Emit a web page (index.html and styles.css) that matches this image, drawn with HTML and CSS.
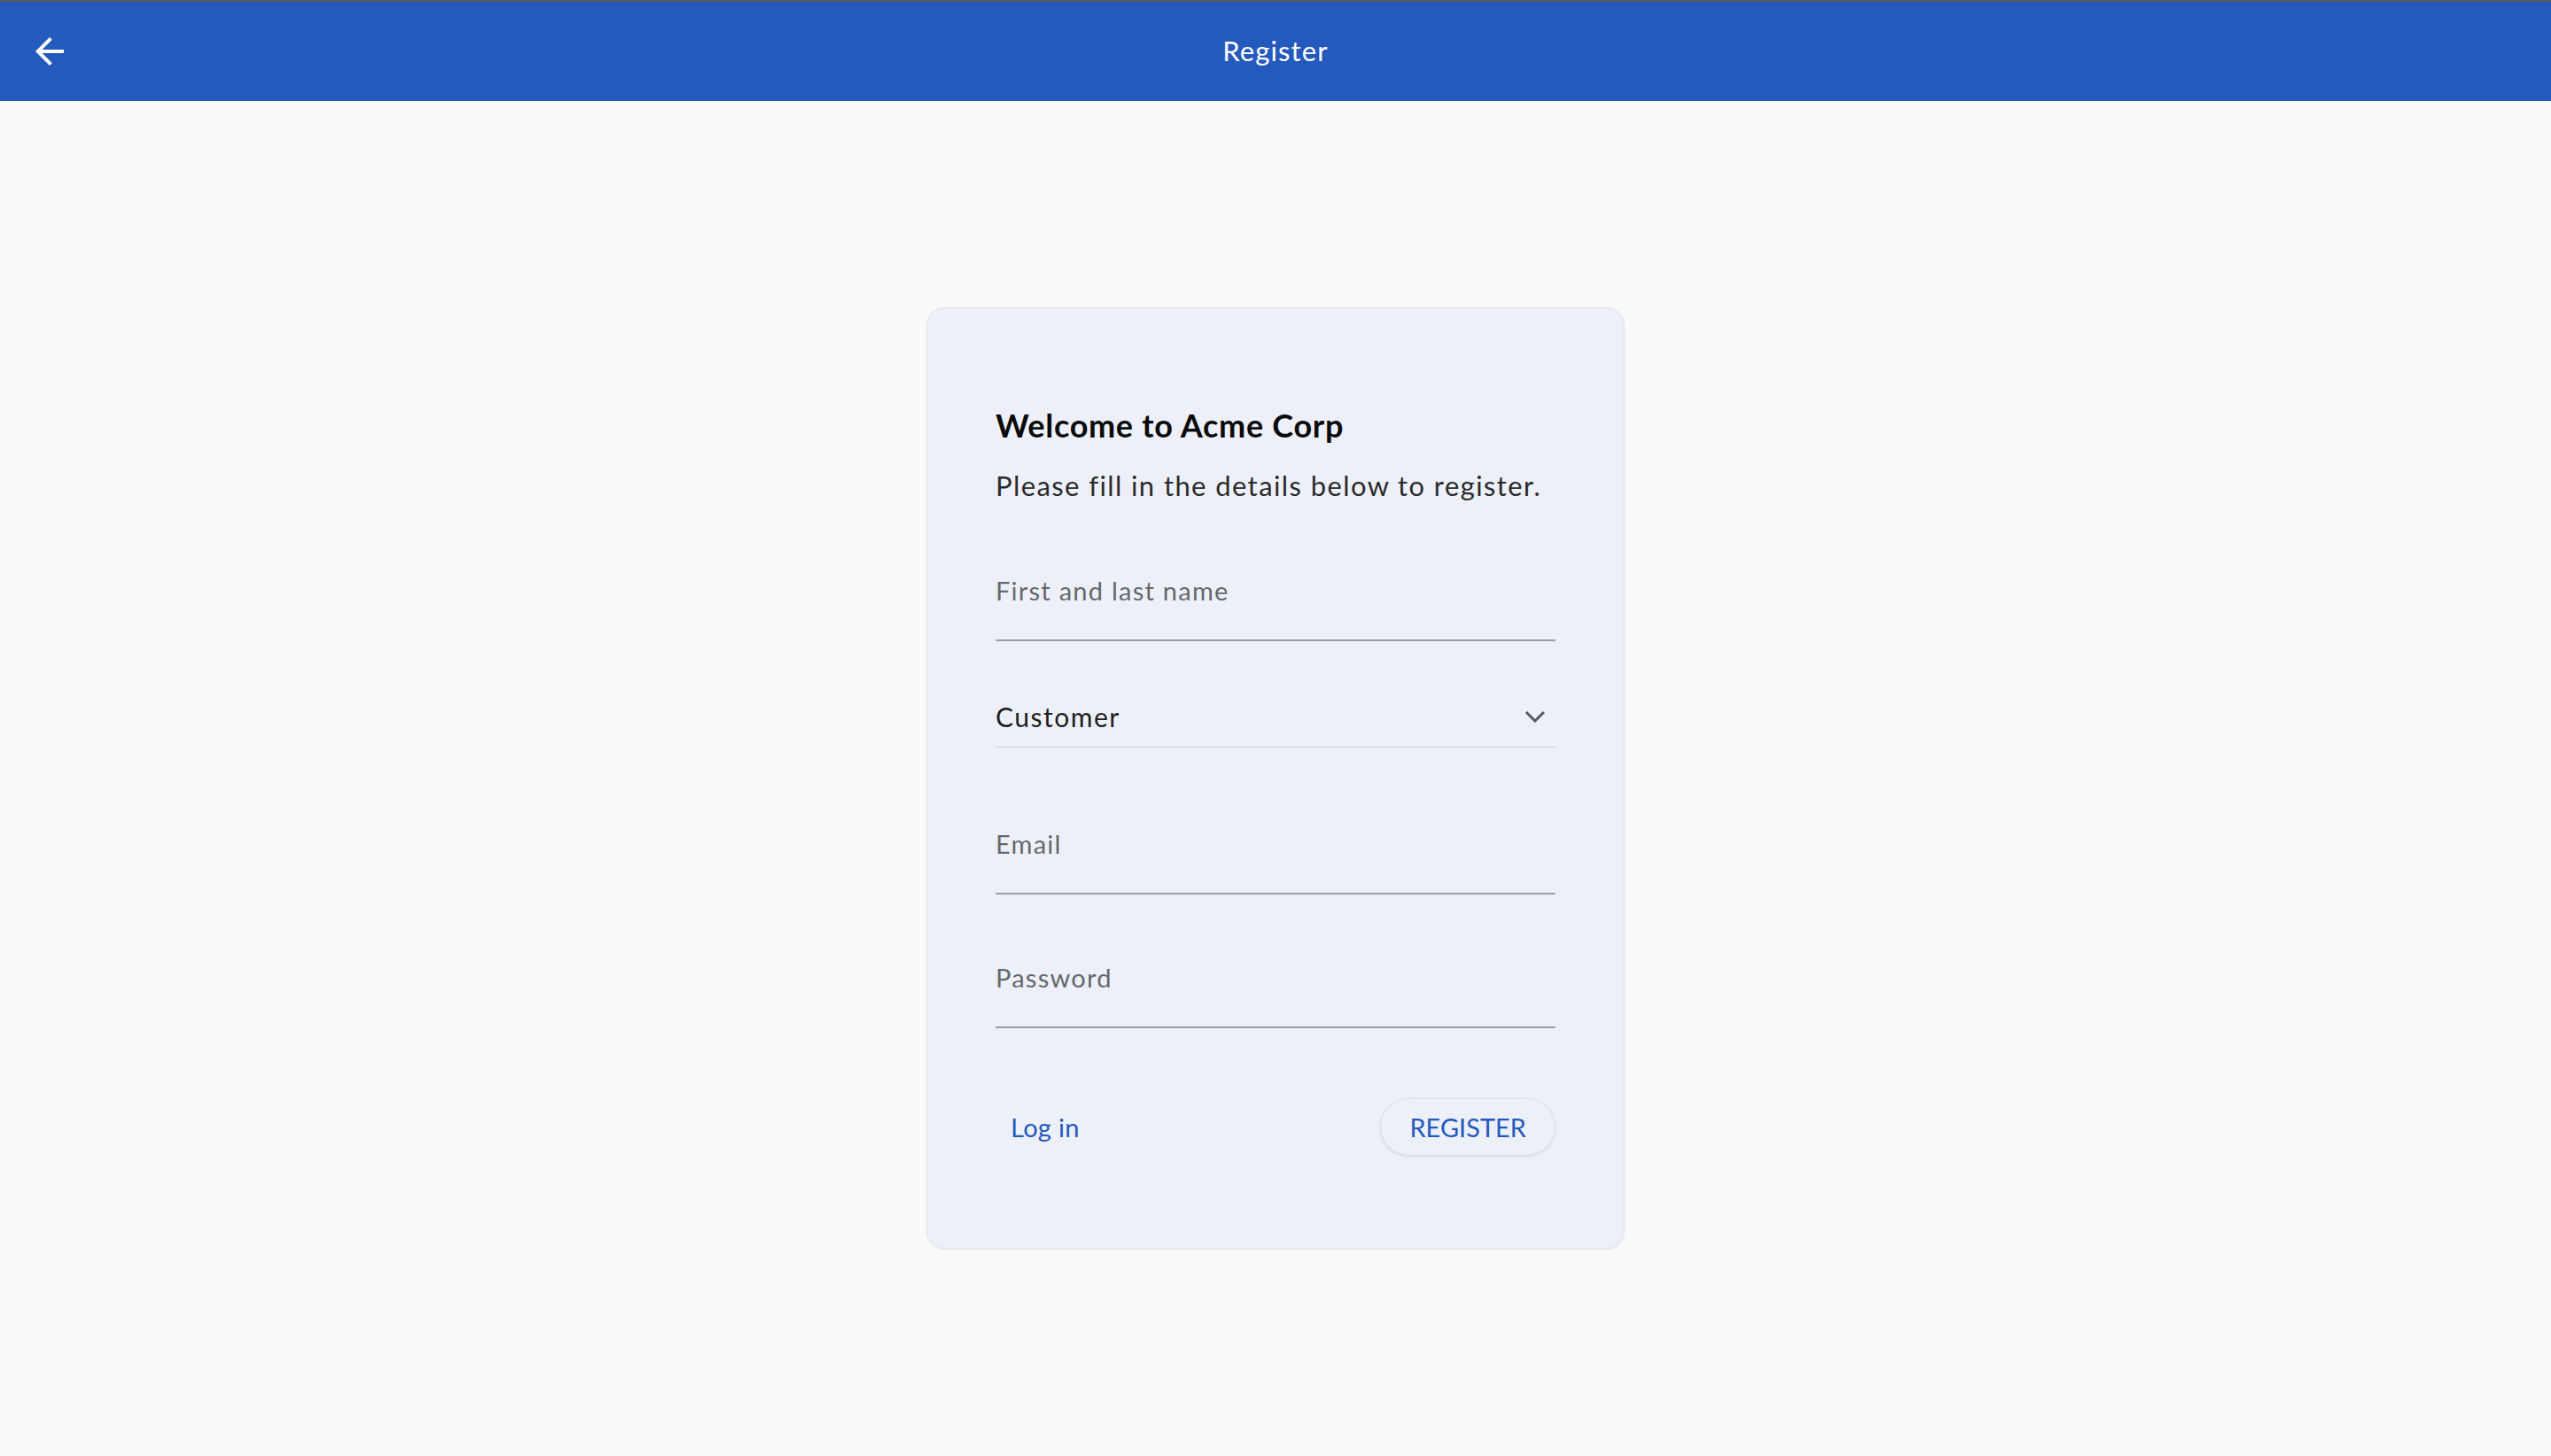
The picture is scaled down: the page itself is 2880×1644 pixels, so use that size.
FILE: index.html
```html
<!DOCTYPE html>
<html>
<head>
<title>Register</title>
<link rel="stylesheet" href="styles.css">
</head>
<body>
  <header class="topbar">
    <button class="back" aria-label="Back">
      <svg viewBox="0 0 24 24" width="48" height="48"><path d="M20 11H7.83l5.59-5.59L12 4l-8 8 8 8 1.41-1.41L7.83 13H20v-2z" fill="#ffffff"/></svg>
    </button>
    <h1 class="title">Register</h1>
  </header>

  <main class="page">
    <div class="card">
      <h2 class="welcome">Welcome to Acme Corp</h2>
      <p class="intro">Please fill in the details below to register.</p>

      <div class="field">
        <span class="placeholder">First and last name</span>
      </div>
      <div class="field select">
        <span class="value">Customer</span>
        <svg class="chevron" viewBox="0 0 24 14" width="24" height="14"><path d="M2 2l10 10L22 2" fill="none" stroke="#555a62" stroke-width="3"/></svg>
      </div>
      <div class="field email">
        <span class="placeholder">Email</span>
      </div>
      <div class="field password">
        <span class="placeholder">Password</span>
      </div>

      <div class="actions">
        <a class="login" href="#">Log in</a>
        <button class="register">REGISTER</button>
      </div>
    </div>
  </main>
</body>
</html>
```

FILE: styles.css
```css
body {
  margin: 0;
  font-family: Lato, "Noto Sans", sans-serif;
  background-color: #fafafa;
  min-height: 100vh;
}
.topbar {
  display: flex;
  align-items: center;
  height: 112px;
  border-top: 2px solid #5b5b5b;
  background-color: #2459bd;
  position: relative;
}
.back {
  background: none;
  border: none;
  padding: 0;
  margin-left: 32px;
  width: 48px;
  height: 48px;
  display: flex;
}
.title {
  position: absolute;
  left: 0;
  right: 0;
  margin: 0 0 3px;
  text-align: center;
  color: #ffffff;
  font-size: 31px;
  font-weight: 400;
  letter-spacing: 1.1px;
  pointer-events: none;
}
.page {
  display: flex;
  justify-content: center;
  padding-top: 233px;
}
.card {
  width: 632px;
  padding: 111px 77px 104px;
  background-color: #edf0f9;
  border: 1px solid #e1e4ec;
  border-radius: 20px;
  box-shadow: 0 1px 3px rgba(0, 0, 0, 0.06);
}
.welcome {
  margin: 0;
  font-size: 36px;
  font-weight: 700;
  color: #0b0b0b;
  line-height: 43px;
  letter-spacing: 0.7px;
}
.intro {
  margin: 28px 0 0;
  font-size: 31px;
  color: #2b2b2b;
  line-height: 37px;
  letter-spacing: 1.4px;
}
.field {
  display: flex;
  align-items: center;
  justify-content: space-between;
  margin-top: 82px;
  padding-bottom: 38px;
  border-bottom: 2px solid #9b9fa8;
  font-size: 29px;
  line-height: 35px;
  letter-spacing: 1.25px;
}
.placeholder {
  color: #66686d;
}
.field.select {
  margin-top: 67px;
  padding-bottom: 16px;
  border-bottom: 1px solid #c9ccd3;
  font-size: 30px;
  line-height: 36px;
  letter-spacing: 1.5px;
}
.value {
  color: #1f1f1f;
}
.chevron {
  margin-right: 11px;
}
.field.email {
  margin-top: 91px;
}
.field.password {
  margin-top: 76px;
}
.actions {
  display: flex;
  justify-content: space-between;
  align-items: center;
  margin-top: 79px;
}
.login {
  margin-left: 17px;
  color: #2459bd;
  text-decoration: none;
  font-size: 29px;
  letter-spacing: 0.3px;
}
.register {
  height: 65px;
  padding: 0 32px;
  border: 1px solid #dcdfe6;
  border-radius: 33px;
  background-color: #edf0f9;
  color: #2459bd;
  font-family: inherit;
  font-size: 29px;
  box-shadow: 0 1px 3px rgba(0, 0, 0, 0.1);
}
```
